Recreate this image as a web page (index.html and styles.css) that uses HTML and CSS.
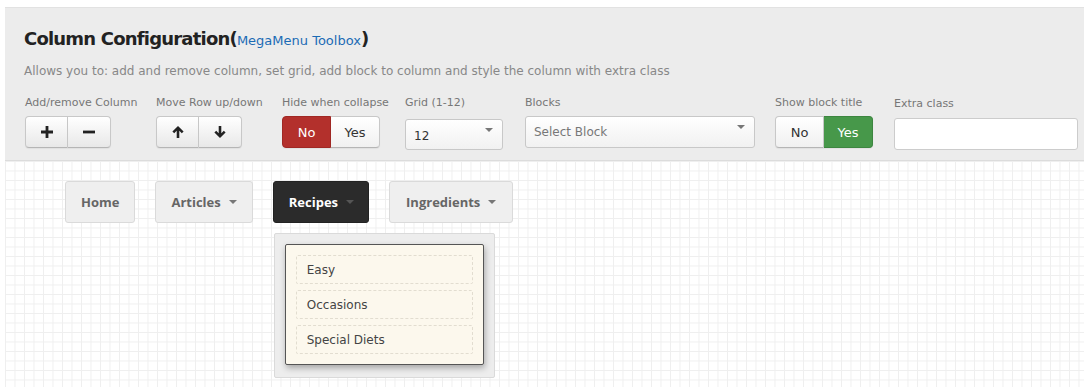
FILE: index.html
```html
<!DOCTYPE html>
<html lang="en">
<head>
    <meta charset="UTF-8">
    <title>Column Configuration</title>
    <link rel="stylesheet" href="styles.css">
</head>
<body>
<div class="page">
    <div class="toolbox">
        <h2 class="title">Column Configuration(<a href="#">MegaMenu Toolbox</a>)</h2>
        <p class="desc">Allows you to: add and remove column, set grid, add block to column and style the column with extra class</p>

        <div class="controls">
            <div class="field f-add">
                <label>Add/remove Column</label>
                <div class="btn-group">
                    <button class="btn btn-icon">
                        <svg width="12" height="12" viewBox="0 0 12 12"><path d="M4.6 0h2.8v4.6H12v2.8H7.4V12H4.6V7.4H0V4.6h4.6z" fill="#222"/></svg>
                    </button>
                    <button class="btn btn-icon">
                        <svg width="12" height="12" viewBox="0 0 12 12"><path d="M0 4.6h12v2.8H0z" fill="#222"/></svg>
                    </button>
                </div>
            </div>
            <div class="field f-move">
                <label>Move Row up/down</label>
                <div class="btn-group">
                    <button class="btn btn-icon">
                        <svg width="12" height="12" viewBox="0 0 12 12"><path d="M6 0L11.6 5.6 9.8 7.3 7.3 4.8V12H4.7V4.8L2.2 7.3 0.4 5.6z" fill="#222"/></svg>
                    </button>
                    <button class="btn btn-icon">
                        <svg width="12" height="12" viewBox="0 0 12 12"><path d="M6 12L11.6 6.4 9.8 4.7 7.3 7.2V0H4.7V7.2L2.2 4.7 0.4 6.4z" fill="#222"/></svg>
                    </button>
                </div>
            </div>
            <div class="field f-hide">
                <label>Hide when collapse</label>
                <div class="btn-group">
                    <button class="btn btn-toggle btn-danger">No</button>
                    <button class="btn btn-toggle">Yes</button>
                </div>
            </div>
            <div class="field f-grid">
                <label>Grid (1-12)</label>
                <div class="select select-grid">12<span class="caret"></span></div>
            </div>
            <div class="field f-blocks">
                <label>Blocks</label>
                <div class="select select-blocks">Select Block<span class="caret"></span></div>
            </div>
            <div class="field f-title">
                <label>Show block title</label>
                <div class="btn-group">
                    <button class="btn btn-toggle">No</button>
                    <button class="btn btn-toggle btn-success">Yes</button>
                </div>
            </div>
            <div class="field f-extra">
                <label>Extra class</label>
                <input type="text" class="input-extra">
            </div>
        </div>
    </div>

    <div class="canvas">
        <ul class="nav">
            <li class="nav-item">Home</li>
            <li class="nav-item">Articles <span class="caret"></span></li>
            <li class="nav-item active">
                Recipes <span class="caret"></span>
                <div class="dropdown">
                    <div class="dropdown-inner">
                        <div class="dropdown-link">Easy</div>
                        <div class="dropdown-link">Occasions</div>
                        <div class="dropdown-link">Special Diets</div>
                    </div>
                </div>
            </li>
            <li class="nav-item">Ingredients <span class="caret"></span></li>
        </ul>
    </div>
</div>
</body>
</html>
```

FILE: styles.css
```css
body {
    margin: 0;
    padding: 0;
    background-color: #fff;
    font-family: "Lucida Grande", "DejaVu Sans", sans-serif;
}
.page {
    padding: 7px 0 0 5px;
}
.toolbox {
    background-color: #ececec;
    border-top: 1px solid #e2e2e2;
    border-bottom: 1px solid #dcdcdc;
    height: 154px;
    padding: 0 6px 0 19px;
    box-sizing: border-box;
}
.title {
    margin: 0;
    padding-top: 19px;
    font-size: 18px;
    line-height: 24px;
    color: #222;
    font-weight: bold;
    letter-spacing: -0.8px;
}
.title a {
    font-size: 13px;
    font-weight: normal;
    color: #1b6bb5;
    text-decoration: none;
    letter-spacing: 0;
}
.desc {
    margin: 11px 0 0 0;
    font-size: 12px;
    line-height: 14px;
    color: #888;
}
.controls {
    display: flex;
    margin-top: 18px;
}
.field label {
    display: block;
    font-size: 11px;
    line-height: 14px;
    color: #777;
    margin-bottom: 6px;
    white-space: nowrap;
}
.f-add { width: 131px; padding-left: 1px; }
.f-move { width: 126px; }
.f-hide { width: 123px; }
.f-grid { width: 120px; }
.f-blocks { width: 250px; }
.f-title { width: 119px; }
.f-extra { width: 184px; }
.f-grid label { margin-bottom: 9px; }
.f-extra label { margin-top: 1px; margin-bottom: 7px; }
.btn-group {
    display: flex;
}
.btn {
    height: 32px;
    margin: 0;
    border: 1px solid #c8c8c8;
    border-bottom-color: #b5b5b5;
    background: linear-gradient(#ffffff, #e8e8e8);
    box-shadow: 0 1px 1px rgba(0, 0, 0, 0.05);
    font-family: "Lucida Grande", "DejaVu Sans", sans-serif;
    font-size: 13px;
    color: #333;
    display: flex;
    align-items: center;
    justify-content: center;
    cursor: pointer;
    padding: 0;
}
.btn-group .btn:first-child {
    border-radius: 4px 0 0 4px;
}
.btn-group .btn:last-child {
    border-radius: 0 4px 4px 0;
    border-left: none;
}
.btn-icon {
    width: 43px;
}
.btn-toggle {
    width: 49px;
    background: linear-gradient(#ffffff, #f0f0f0);
}
.btn-danger {
    background: #b3302c;
    border-color: #a02824;
    color: #fff;
}
.btn-success {
    background: #47984a;
    border-color: #3d8640;
    color: #fff;
}
.select {
    position: relative;
    height: 31px;
    box-sizing: border-box;
    border: 1px solid #c8c8c8;
    border-radius: 3px;
    background: linear-gradient(#ffffff, #f1f1f1);
    font-size: 12px;
    color: #333;
    padding: 9px 0 0 8px;
}
.select-grid {
    width: 98px;
    padding-top: 9px;
}
.select-blocks {
    width: 230px;
    height: 32px;
    color: #777;
    padding-top: 8px;
}
.select .caret {
    position: absolute;
    right: 9px;
    top: 10px;
}
.caret {
    display: inline-block;
    width: 0;
    height: 0;
    border-left: 4px solid transparent;
    border-right: 4px solid transparent;
    border-top: 4px solid #777;
    vertical-align: middle;
    margin-top: -2px;
}
.input-extra {
    width: 184px;
    height: 32px;
    box-sizing: border-box;
    border: 1px solid #ccc;
    border-radius: 3px;
    background: #fff;
    margin: 0;
}
.canvas {
    height: 226px;
    background-color: #fff;
    background-image:
        linear-gradient(to right, #efefef 1px, transparent 1px),
        linear-gradient(to bottom, #efefef 1px, transparent 1px);
    background-size: 9.5px 9.5px;
    padding: 20px 0 0 60px;
    box-sizing: border-box;
}
.nav {
    list-style: none;
    margin: 0;
    padding: 0;
    display: flex;
    gap: 20px;
}
.nav-item {
    position: relative;
    height: 42px;
    box-sizing: border-box;
    padding: 0 15px;
    border: 1px solid #dadada;
    border-radius: 3px;
    background-color: #efefef;
    font-family: "Open Sans", sans-serif;
    font-weight: bold;
    font-size: 13px;
    color: #666;
    display: flex;
    align-items: center;
    gap: 8px;
}
.nav-item:last-child {
    padding: 0 16px;
}
.nav-item .caret {
    border-top-color: #777;
    margin-top: 0;
}
.nav-item.active {
    background-color: #2b2b2b;
    border-color: #222;
    color: #fff;
    padding: 0 14px 0 15px;
}
.nav-item.active .caret {
    border-top-color: #555;
}
.dropdown {
    position: absolute;
    top: 51px;
    left: 0;
    width: 221px;
    height: 145px;
    box-sizing: border-box;
    background-color: #ededed;
    border: 1px solid #dadada;
    border-radius: 2px;
    padding: 10px;
}
.dropdown-inner {
    background-color: #fcf8ed;
    border: 1px solid #555;
    border-radius: 2px;
    box-shadow: 1px 3px 6px rgba(0, 0, 0, 0.3);
    padding: 10px 10px 10px 10px;
    display: flex;
    flex-direction: column;
    gap: 6px;
}
.dropdown-link {
    height: 29px;
    box-sizing: border-box;
    border: 1px dashed #e2ddd0;
    border-radius: 2px;
    padding-left: 10px;
    display: flex;
    align-items: center;
    font-family: "Lucida Grande", "DejaVu Sans", sans-serif;
    font-weight: normal;
    font-size: 12px;
    color: #444;
}
```
